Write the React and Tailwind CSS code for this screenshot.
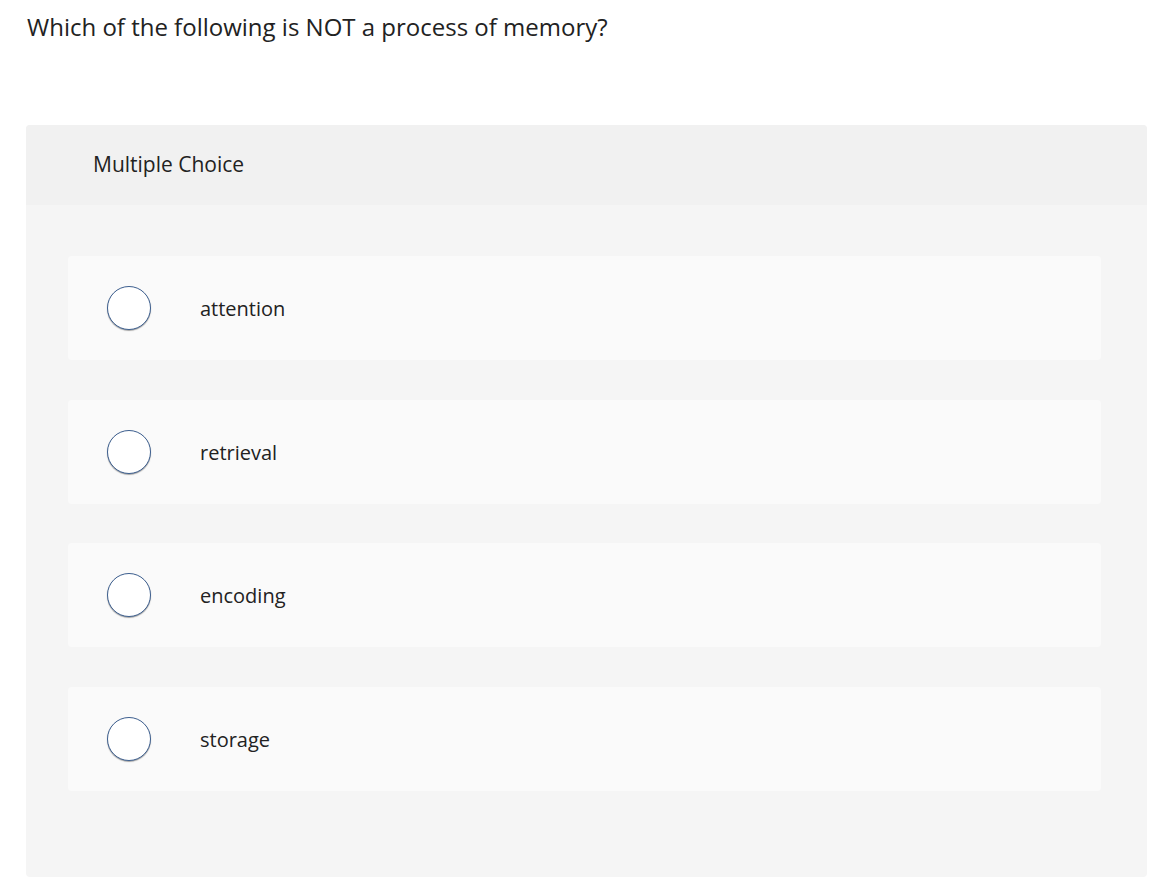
const OPTIONS = ['attention', 'retrieval', 'encoding', 'storage']

function Radio() {
  return (
    <span className="block h-[44px] w-[44px] shrink-0 rounded-full border border-[#3d5f8f] bg-white shadow-[0_1px_1px_rgba(0,0,0,0.35)]" />
  )
}

export default function App() {
  return (
    <div className="min-h-screen bg-white text-[#222] font-['Open_Sans',sans-serif]">
      <div className="px-[27px] pt-[9px]">
        <h1 className="text-[24px] leading-[36px]">Which of the following is NOT a process of memory?</h1>
      </div>
      <div className="mx-[26px] mt-[80px] w-[1121px] rounded-[4px] bg-[#f5f5f5] pb-[86px]">
        <div className="flex h-[80px] items-center rounded-t-[4px] bg-[#f1f1f1] px-[67px]">
          <span className="text-[21px]">Multiple Choice</span>
        </div>
        <div className="mt-[51px] flex flex-col gap-[39.5px] pl-[42px] pr-[46px]">
          {OPTIONS.map((opt) => (
            <label key={opt} className="flex h-[104px] items-center rounded-[4px] bg-[#fafafa] pl-[39px]">
              <Radio />
              <span className="ml-[49px] pt-[2px] text-[20px]">{opt}</span>
            </label>
          ))}
        </div>
      </div>
    </div>
  )
}
